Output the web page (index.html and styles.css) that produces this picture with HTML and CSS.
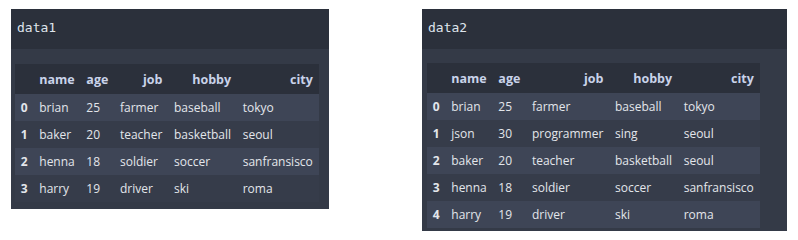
FILE: index.html
```html
<!DOCTYPE html>
<html>
<head>
<meta charset="utf-8">
<link rel="stylesheet" href="styles.css">
</head>
<body>
<div class="page">
  <section class="panel panel-one">
    <div class="panel-title">data1</div>
    <div class="panel-body">
      <table class="frame">
        <thead>
          <tr><th></th><th>name</th><th>age</th><th>job</th><th>hobby</th><th>city</th></tr>
        </thead>
        <tbody>
          <tr><th>0</th><td>brian</td><td>25</td><td>farmer</td><td>baseball</td><td>tokyo</td></tr>
          <tr><th>1</th><td>baker</td><td>20</td><td>teacher</td><td>basketball</td><td>seoul</td></tr>
          <tr><th>2</th><td>henna</td><td>18</td><td>soldier</td><td>soccer</td><td>sanfransisco</td></tr>
          <tr><th>3</th><td>harry</td><td>19</td><td>driver</td><td>ski</td><td>roma</td></tr>
        </tbody>
      </table>
    </div>
  </section>
  <section class="panel panel-two">
    <div class="panel-title">data2</div>
    <div class="panel-body">
      <table class="frame">
        <thead>
          <tr><th></th><th>name</th><th>age</th><th>job</th><th>hobby</th><th>city</th></tr>
        </thead>
        <tbody>
          <tr><th>0</th><td>brian</td><td>25</td><td>farmer</td><td>baseball</td><td>tokyo</td></tr>
          <tr><th>1</th><td>json</td><td>30</td><td>programmer</td><td>sing</td><td>seoul</td></tr>
          <tr><th>2</th><td>baker</td><td>20</td><td>teacher</td><td>basketball</td><td>seoul</td></tr>
          <tr><th>3</th><td>henna</td><td>18</td><td>soldier</td><td>soccer</td><td>sanfransisco</td></tr>
          <tr><th>4</th><td>harry</td><td>19</td><td>driver</td><td>ski</td><td>roma</td></tr>
        </tbody>
      </table>
    </div>
  </section>
</div>
</body>
</html>
```
FILE: styles.css
```css
html, body {
  margin: 0;
  padding: 0;
  background: #ffffff;
}

.page {
  display: flex;
  align-items: flex-start;
  padding: 9px 0 0 11px;
}

.panel {
  background: #343a47;
}

.panel-one {
  width: 318px;
}

.panel-two {
  width: 365px;
  margin-left: 93px;
}

.panel-title {
  height: 40px;
  box-sizing: border-box;
  padding: 11px 0 0 6px;
  background: #2b303b;
  color: #dfe4ec;
  font-family: "DejaVu Sans Mono", monospace;
  font-size: 13px;
  line-height: 16px;
}

.panel-body {
  display: flex;
}

.panel-one .panel-body {
  padding: 15px 10px 7px 4px;
}

.panel-two .panel-body {
  padding: 14px 27px 3px 5px;
}

.frame {
  border-collapse: collapse;
  border-spacing: 0;
  font-family: "Open Sans", sans-serif;
  font-size: 12px;
  color: #e3e6eb;
}

.frame th,
.frame td {
  padding: 0 5.8px;
  white-space: nowrap;
}

.frame th {
  font-weight: 700;
}

.frame thead tr {
  height: 30px;
  background: #2b303b;
}

.frame thead th {
  text-align: right;
  font-size: 12.5px;
  color: #c9d3ea;
}

.frame tbody tr {
  height: 27px;
}

.frame tbody tr:nth-child(odd) {
  background: #3e4556;
}

.frame tbody tr:nth-child(even) {
  background: #363c4a;
}

.frame tbody th {
  text-align: left;
  color: #e3e6eb;
}

.frame td {
  text-align: left;
}
```
